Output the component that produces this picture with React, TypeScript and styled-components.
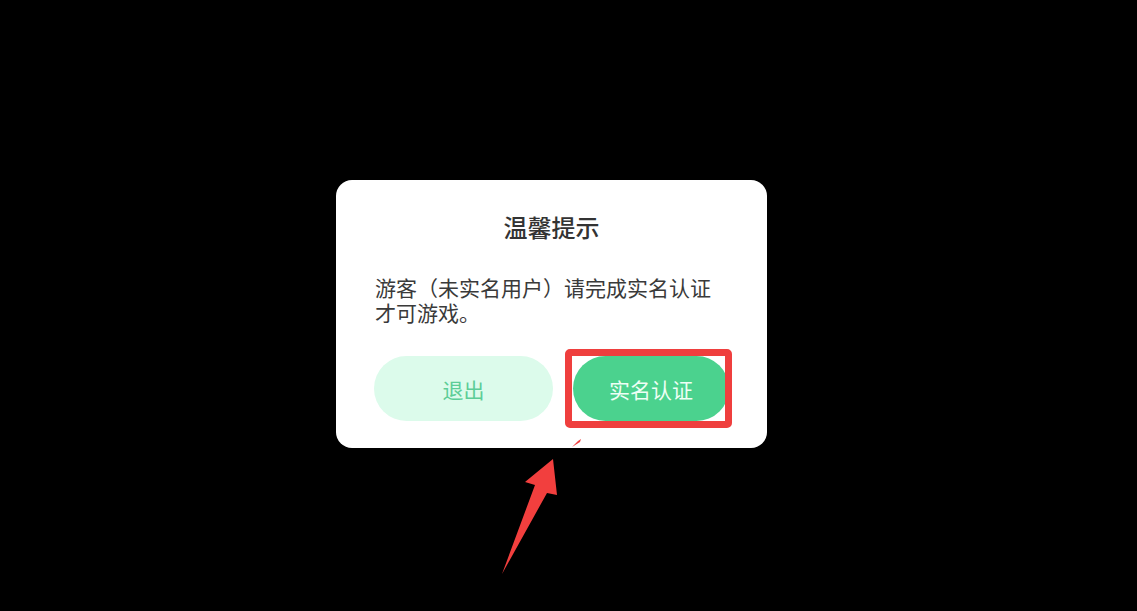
import styled, { createGlobalStyle } from "styled-components";

const GlobalStyle = createGlobalStyle`
  html, body, #root {
    margin: 0;
    height: 100%;
  }
  body {
    background: #000;
    font-family: "Noto Sans CJK SC", "Noto Sans", sans-serif;
  }
`;

const Stage = styled.div`
  position: relative;
  height: 100%;
  padding: 180px 0 0 336px;
  box-sizing: border-box;
  overflow: hidden;
`;

const Dialog = styled.div`
  width: 431px;
  height: 268px;
  box-sizing: border-box;
  background: #fff;
  border-radius: 16px;
  padding: 31px 38px 27px 38px;
  display: flex;
  flex-direction: column;
`;

const Title = styled.h2`
  margin: 0;
  font-size: 24px;
  line-height: 32px;
  font-weight: 500;
  color: #333;
  text-align: center;
`;

const Message = styled.p`
  margin: 32px 0 0 1px;
  width: 345px;
  font-size: 21px;
  line-height: 25px;
  color: #3a3a3a;
`;

const Actions = styled.div`
  margin-top: 31px;
  display: flex;
  gap: 20px;
`;

const Button = styled.button<{ $primary?: boolean }>`
  position: relative;
  width: ${(p) => (p.$primary ? "156px" : "179px")};
  height: 65px;
  border: none;
  border-radius: 33px;
  font-family: inherit;
  font-size: 21px;
  background: ${(p) => (p.$primary ? "#4bd28e" : "#dcfbeb")};
  color: ${(p) => (p.$primary ? "#eefff5" : "#5ccd97")};
  padding: 0;
  cursor: pointer;
`;

const Highlight = styled.span`
  position: absolute;
  left: -8px;
  top: -7px;
  right: -3px;
  bottom: -7px;
  border: 7px solid #ef3f3e;
  border-radius: 5px;
  pointer-events: none;
`;

const ArrowMark = styled.svg`
  position: absolute;
  left: 0;
  top: 0;
  pointer-events: none;
`;

export default function App() {
  return (
    <>
      <GlobalStyle />
      <Stage>
        <Dialog>
          <Title>温馨提示</Title>
          <Message>游客（未实名用户）请完成实名认证才可游戏。</Message>
          <Actions>
            <Button>退出</Button>
            <Button $primary>
              实名认证
              <Highlight />
            </Button>
          </Actions>
        </Dialog>
        <ArrowMark width="1137" height="611" viewBox="0 0 1137 611">
          <polygon
            points="553,459 525,482 535,485 502,574 547,493 557,495"
            fill="#f23f3e"
          />
          <polygon points="572,447 578,441 581,439 580,442" fill="#f23f3e" />
        </ArrowMark>
      </Stage>
    </>
  );
}
